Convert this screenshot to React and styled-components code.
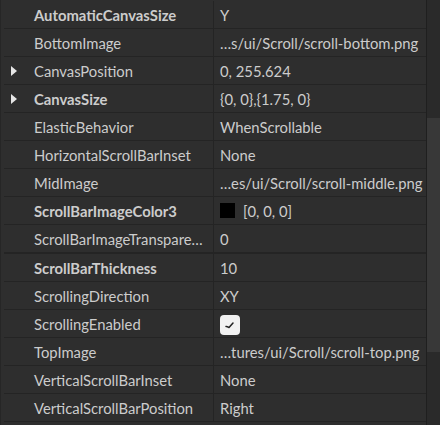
import styled, { createGlobalStyle } from "styled-components"

const GlobalStyle = createGlobalStyle`
  html, body {
    margin: 0;
    padding: 0;
    background: #2e2e2e;
  }
  body {
    font-family: Lato, "Noto Sans", sans-serif;
  }
`

const Panel = styled.div`
  width: 440px;
  height: 425px;
  display: flex;
  overflow: hidden;
  background: #2e2e2e;
`

const Grid = styled.div`
  flex: 1;
  padding-top: 1px;
  padding-left: 3px;
  border-left: 1px solid #262626;
  border-right: 1px solid #1f1f1f;
`

const Row = styled.div`
  height: 27px;
  display: grid;
  grid-template-columns: 210px 1fr;
  border-bottom: ${(p) => (p.$thick ? "2px" : "1px")} solid #242424;
  color: #cccccc;
  font-size: 14.8px;
`

const NameCell = styled.div`
  display: flex;
  align-items: center;
  border-right: 1px solid #242424;
  padding-left: 30px;
  position: relative;
  font-weight: ${(p) => (p.$bold ? 700 : 400)};
  white-space: nowrap;
  overflow: hidden;
`

const Arrow = styled.span`
  position: absolute;
  left: 7px;
  top: 9px;
  width: 0;
  height: 0;
  border-top: 5px solid transparent;
  border-bottom: 5px solid transparent;
  border-left: 6px solid #e6e6e6;
`

const ValueCell = styled.div`
  display: flex;
  align-items: center;
  gap: 8px;
  padding-left: 6px;
  white-space: nowrap;
  overflow: hidden;
`

const Swatch = styled.span`
  width: 15px;
  height: 15px;
  background: #000;
`

const Check = styled.span`
  width: 20px;
  height: 20px;
  border-radius: 4px;
  background: #f2f2f2;
  display: flex;
  align-items: center;
  justify-content: center;
  margin-top: 2px;
`

const ScrollTrack = styled.div`
  width: 13px;
  background: #2a2a2a;
  padding-top: 118px;
`

const ScrollThumb = styled.div`
  height: 234px;
  background: #383838;
`

const rows = [
  { name: "AutomaticCanvasSize", value: "Y", bold: true },
  { name: "BottomImage", value: "…s/ui/Scroll/scroll-bottom.png" },
  { name: "CanvasPosition", value: "0, 255.624", arrow: true },
  { name: "CanvasSize", value: "{0, 0},{1.75, 0}", arrow: true, bold: true },
  { name: "ElasticBehavior", value: "WhenScrollable" },
  { name: "HorizontalScrollBarInset", value: "None" },
  { name: "MidImage", value: "…es/ui/Scroll/scroll-middle.png" },
  { name: "ScrollBarImageColor3", value: "[0, 0, 0]", bold: true, swatch: true },
  { name: "ScrollBarImageTranspare…", value: "0", thick: true },
  { name: "ScrollBarThickness", value: "10", bold: true },
  { name: "ScrollingDirection", value: "XY" },
  { name: "ScrollingEnabled", check: true },
  { name: "TopImage", value: "…tures/ui/Scroll/scroll-top.png" },
  { name: "VerticalScrollBarInset", value: "None" },
  { name: "VerticalScrollBarPosition", value: "Right" },
]

const App = () => {
  return (
    <>
      <GlobalStyle />
      <Panel>
        <Grid>
          {rows.map((r) => (
            <Row key={r.name} $thick={r.thick}>
              <NameCell $bold={r.bold}>
                {r.arrow && <Arrow />}
                {r.name}
              </NameCell>
              <ValueCell>
                {r.swatch && <Swatch />}
                {r.check ? (
                  <Check>
                    <svg width="12" height="10" viewBox="0 0 12 10">
                      <path
                        d="M2 6.5 C3 6 4 7 5 7.5 L9 3"
                        fill="none"
                        stroke="#222"
                        strokeWidth="1.5"
                        strokeLinecap="round"
                        strokeLinejoin="round"
                      />
                    </svg>
                  </Check>
                ) : (
                  r.value
                )}
              </ValueCell>
            </Row>
          ))}
        </Grid>
        <ScrollTrack>
          <ScrollThumb />
        </ScrollTrack>
      </Panel>
    </>
  )
}

export default App
